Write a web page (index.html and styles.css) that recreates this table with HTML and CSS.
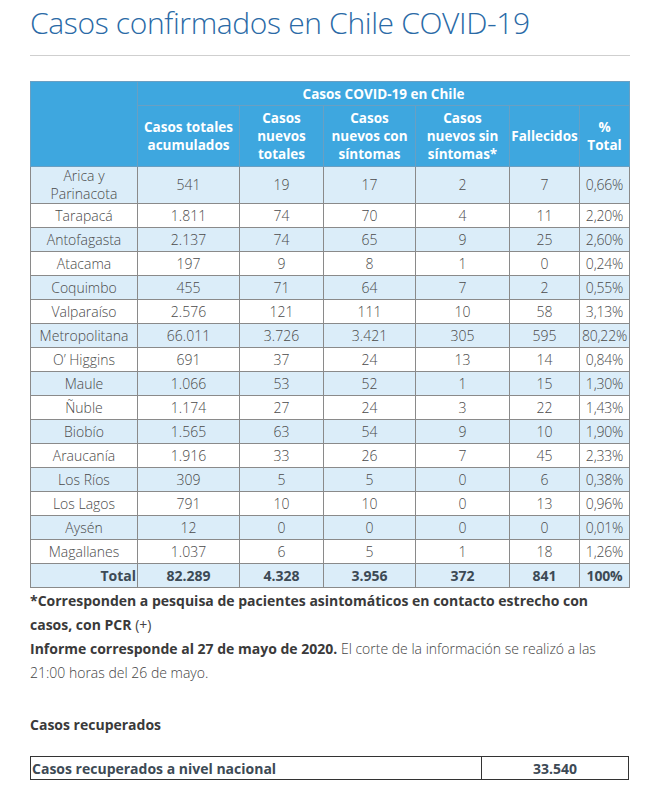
FILE: index.html
```html
<!DOCTYPE html>
<html lang="es">
<head>
    <meta charset="UTF-8">
    <title>Casos confirmados en Chile COVID-19</title>
    <link rel="stylesheet" href="styles.css">
</head>
<body>
    <div class="page">
        <h1 class="title">Casos confirmados en Chile COVID-19</h1>
        <hr class="divider">

        <table class="cases">
            <colgroup>
                <col class="c1"><col class="c2"><col class="c3"><col class="c4"><col class="c5"><col class="c6"><col class="c7">
            </colgroup>
            <thead>
                <tr>
                    <th rowspan="2"></th>
                    <th colspan="6" class="group">Casos COVID-19 en Chile</th>
                </tr>
                <tr>
                    <th>Casos totales<br>acumulados</th>
                    <th>Casos<br>nuevos<br>totales</th>
                    <th>Casos<br>nuevos con<br>síntomas</th>
                    <th>Casos<br>nuevos sin<br>síntomas*</th>
                    <th>Fallecidos</th>
                    <th>%<br>Total</th>
                </tr>
            </thead>
            <tbody>
                <tr class="alt"><td>Arica y Parinacota</td><td>541</td><td>19</td><td>17</td><td>2</td><td>7</td><td>0,66%</td></tr>
                <tr><td>Tarapacá</td><td>1.811</td><td>74</td><td>70</td><td>4</td><td>11</td><td>2,20%</td></tr>
                <tr class="alt"><td>Antofagasta</td><td>2.137</td><td>74</td><td>65</td><td>9</td><td>25</td><td>2,60%</td></tr>
                <tr><td>Atacama</td><td>197</td><td>9</td><td>8</td><td>1</td><td>0</td><td>0,24%</td></tr>
                <tr class="alt"><td>Coquimbo</td><td>455</td><td>71</td><td>64</td><td>7</td><td>2</td><td>0,55%</td></tr>
                <tr><td>Valparaíso</td><td>2.576</td><td>121</td><td>111</td><td>10</td><td>58</td><td>3,13%</td></tr>
                <tr class="alt"><td>Metropolitana</td><td>66.011</td><td>3.726</td><td>3.421</td><td>305</td><td>595</td><td>80,22%</td></tr>
                <tr><td>O’ Higgins</td><td>691</td><td>37</td><td>24</td><td>13</td><td>14</td><td>0,84%</td></tr>
                <tr class="alt"><td>Maule</td><td>1.066</td><td>53</td><td>52</td><td>1</td><td>15</td><td>1,30%</td></tr>
                <tr><td>Ñuble</td><td>1.174</td><td>27</td><td>24</td><td>3</td><td>22</td><td>1,43%</td></tr>
                <tr class="alt"><td>Biobío</td><td>1.565</td><td>63</td><td>54</td><td>9</td><td>10</td><td>1,90%</td></tr>
                <tr><td>Araucanía</td><td>1.916</td><td>33</td><td>26</td><td>7</td><td>45</td><td>2,33%</td></tr>
                <tr class="alt"><td>Los Ríos</td><td>309</td><td>5</td><td>5</td><td>0</td><td>6</td><td>0,38%</td></tr>
                <tr><td>Los Lagos</td><td>791</td><td>10</td><td>10</td><td>0</td><td>13</td><td>0,96%</td></tr>
                <tr class="alt"><td>Aysén</td><td>12</td><td>0</td><td>0</td><td>0</td><td>0</td><td>0,01%</td></tr>
                <tr><td>Magallanes</td><td>1.037</td><td>6</td><td>5</td><td>1</td><td>18</td><td>1,26%</td></tr>
                <tr class="alt total"><td class="label">Total</td><td>82.289</td><td>4.328</td><td>3.956</td><td>372</td><td>841</td><td>100%</td></tr>
            </tbody>
        </table>

        <p class="note"><strong>*Corresponden a pesquisa de pacientes asintomáticos en contacto estrecho con</strong><br>
        <strong>casos, con PCR</strong> <span class="plus">(+)</span><br>
        <strong>Informe corresponde al 27 de mayo de 2020.</strong> El corte de la información se realizó a las<br>
        21:00 horas del 26 de mayo.</p>

        <h4 class="subtitle">Casos recuperados</h4>

        <table class="recovered">
            <tr>
                <td class="name">Casos recuperados a nivel nacional</td>
                <td class="value">33.540</td>
            </tr>
        </table>
    </div>
</body>
</html>
```

FILE: styles.css
```css
body { margin: 0; background: #fff; font-family: "Open Sans", "Noto Sans", sans-serif; color: #444; }
.page { width: 600px; padding: 0 30px; }

.title { margin: 0; padding-top: 4px; font-size: 30px; font-weight: 300; line-height: 38px; color: #2a6aa6; letter-spacing: -0.35px; }
.divider { margin: 13px 0 25px; border: none; border-top: 1px solid #cfcfcf; }

.cases { width: 599px; border-collapse: collapse; border: 1px solid #3b3b3b; table-layout: fixed; font-size: 14px; }
.cases col.c1 { width: 107px; }
.cases col.c2 { width: 102px; }
.cases col.c3 { width: 84px; }
.cases col.c4 { width: 92px; }
.cases col.c5 { width: 94px; }
.cases col.c6 { width: 70px; }
.cases col.c7 { width: 50px; }
.cases th { background: #3ea7df; color: #fff; font-weight: 700; font-size: 13.5px; line-height: 18px; padding: 3px 0; border: 1px solid #6a9fc2; text-align: center; white-space: nowrap; }
.cases th.group { height: 17px; padding: 3px 0 2px; }
.cases td { border: 1px solid #8a8a8a; text-align: center; font-weight: 300; line-height: 18px; height: 23px; padding: 0; color: #4a4a4a; white-space: nowrap; }
.cases td:first-child { white-space: normal; }
.cases td:last-child { letter-spacing: -0.2px; }
.cases tr.alt td { background: #dbedf9; }
.cases tr.total td { font-weight: 700; color: #3d4a55; }
.cases td.label { text-align: right; padding-right: 1px; }

.note { margin: 1px 0 0; font-size: 14px; line-height: 24px; color: #444; font-weight: 300; white-space: nowrap; }
.note strong { font-weight: 700; color: #3a3a3a; }
.note .plus { font-weight: 400; }

.subtitle { margin: 28px 0 0; font-size: 14px; line-height: 24px; font-weight: 700; color: #3a3a3a; }

.recovered { margin-top: 19px; width: 599px; border-collapse: collapse; border: 1px solid #333; font-size: 14px; }
.recovered td { border: 1px solid #333; padding: 0 1px; height: 22px; font-weight: 700; color: #3d4a55; }
.recovered td.value { width: 144px; text-align: center; }
```
